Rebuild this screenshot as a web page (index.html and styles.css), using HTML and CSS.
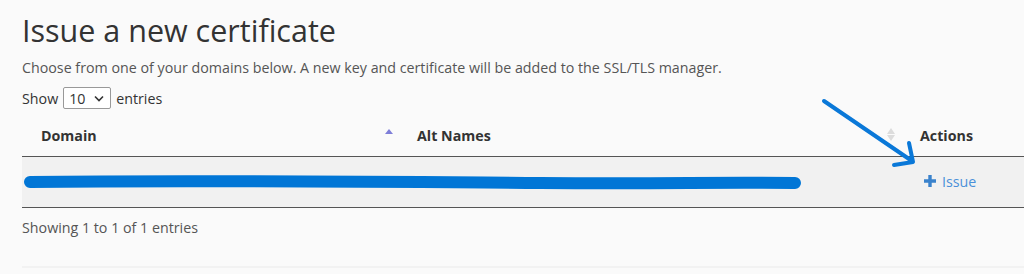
FILE: index.html
```html
<!DOCTYPE html>
<html lang="en">
<head>
<meta charset="utf-8">
<title>Issue a new certificate</title>
<link rel="stylesheet" href="styles.css">
</head>
<body>
<div class="page">
  <h1 class="title">Issue a new certificate</h1>
  <p class="lead">Choose from one of your domains below. A new key and certificate will be added to the SSL/TLS manager.</p>
  <div class="length">
    <span>Show</span>
    <span class="select">10<svg class="chev" width="10" height="7" viewBox="0 0 10 7"><path d="M1 1.5 L5 5.5 L9 1.5" fill="none" stroke="#333" stroke-width="1.6"/></svg></span>
    <span>entries</span>
  </div>
  <table class="grid">
    <thead>
      <tr>
        <th class="col-domain">Domain<span class="sort-asc"></span></th>
        <th class="col-alt">Alt Names<span class="sort-both"><i class="up"></i><i class="down"></i></span></th>
        <th class="col-act">Actions</th>
      </tr>
    </thead>
    <tbody>
      <tr>
        <td></td>
        <td></td>
        <td><a class="issue" href="#"><svg class="plus" width="12" height="12" viewBox="0 0 12 12"><path d="M4.3 0h3.4v4.3H12v3.4H7.7V12H4.3V7.7H0V4.3h4.3z" fill="#3a82cc"/></svg>Issue</a></td>
      </tr>
    </tbody>
  </table>
  <div class="info">Showing 1 to 1 of 1 entries</div>
  <div class="rule"></div>
</div>
<svg class="marks" width="1024" height="274" viewBox="0 0 1024 274">
  <path d="M30 182 C200 180 400 182 540 183 S700 182 795 183" fill="none" stroke="#0176d6" stroke-width="12" stroke-linecap="round"/>
  <g fill="none" stroke="#0a78d8" stroke-width="4" stroke-linecap="round" stroke-linejoin="round">
    <path d="M824 101 L912 161"/>
    <path d="M909 143 L913 162 L894 165"/>
  </g>
</svg>
</body>
</html>
```

FILE: styles.css
```css
html, body {
  margin: 0;
  padding: 0;
  background: #fafafa;
}
body {
  font-family: "Open Sans", "Liberation Sans", sans-serif;
  color: #333;
  font-size: 14.25px;
  width: 1024px;
  height: 274px;
  overflow: hidden;
  position: relative;
}
.page {
  padding: 10px 0 0 22px;
}
.title {
  font-size: 30.5px;
  font-weight: 400;
  line-height: 40px;
  margin: 0;
  color: #333;
}
.lead {
  margin: 8px 0 0;
  line-height: 20px;
  color: #555;
}
.length {
  display: flex;
  align-items: center;
  gap: 5px;
  margin-top: 8px;
  height: 24px;
  color: #333;
}
.select {
  display: inline-flex;
  align-items: center;
  justify-content: space-between;
  box-sizing: border-box;
  width: 48px;
  height: 22px;
  padding: 0 6px 0 5px;
  border: 1px solid #999;
  border-radius: 2px;
  background: #fff;
}
.chev { margin-top: 1px; }
.grid {
  border-collapse: collapse;
  width: 1002px;
  margin-top: 8px;
  table-layout: fixed;
}
.grid th {
  box-sizing: border-box;
  position: relative;
  text-align: left;
  font-weight: 700;
  padding: 0 18px 2px 19px;
  height: 38px;
  border-bottom: 1px solid #555;
  color: #333;
}
.col-domain { width: 376px; }
.col-alt { width: 503px; }
.grid td {
  height: 50px;
  padding: 0 18px 0 23px;
  background: #f1f1f1;
  border-bottom: 1px solid #555;
}
.sort-asc {
  position: absolute;
  right: 5px;
  top: 11px;
  width: 0;
  height: 0;
  border-left: 4px solid transparent;
  border-right: 4px solid transparent;
  border-bottom: 5px solid #7e7ed8;
}
.sort-both {
  position: absolute;
  right: 6px;
  top: 10px;
  display: flex;
  flex-direction: column;
  gap: 1px;
}
.sort-both i {
  width: 0;
  height: 0;
  border-left: 4px solid transparent;
  border-right: 4px solid transparent;
}
.sort-both .up { border-bottom: 6px solid #dcdcdc; }
.sort-both .down { border-top: 6px solid #dcdcdc; }
.issue {
  display: inline-flex;
  align-items: center;
  gap: 6px;
  color: #4a90d9;
  text-decoration: none;
}
.info {
  margin-top: 10px;
  line-height: 20px;
  color: #555;
}
.rule {
  margin-top: 28px;
  height: 2px;
  background: #f2f2f2;
}
.marks {
  position: absolute;
  left: 0;
  top: 0;
  pointer-events: none;
}
```
